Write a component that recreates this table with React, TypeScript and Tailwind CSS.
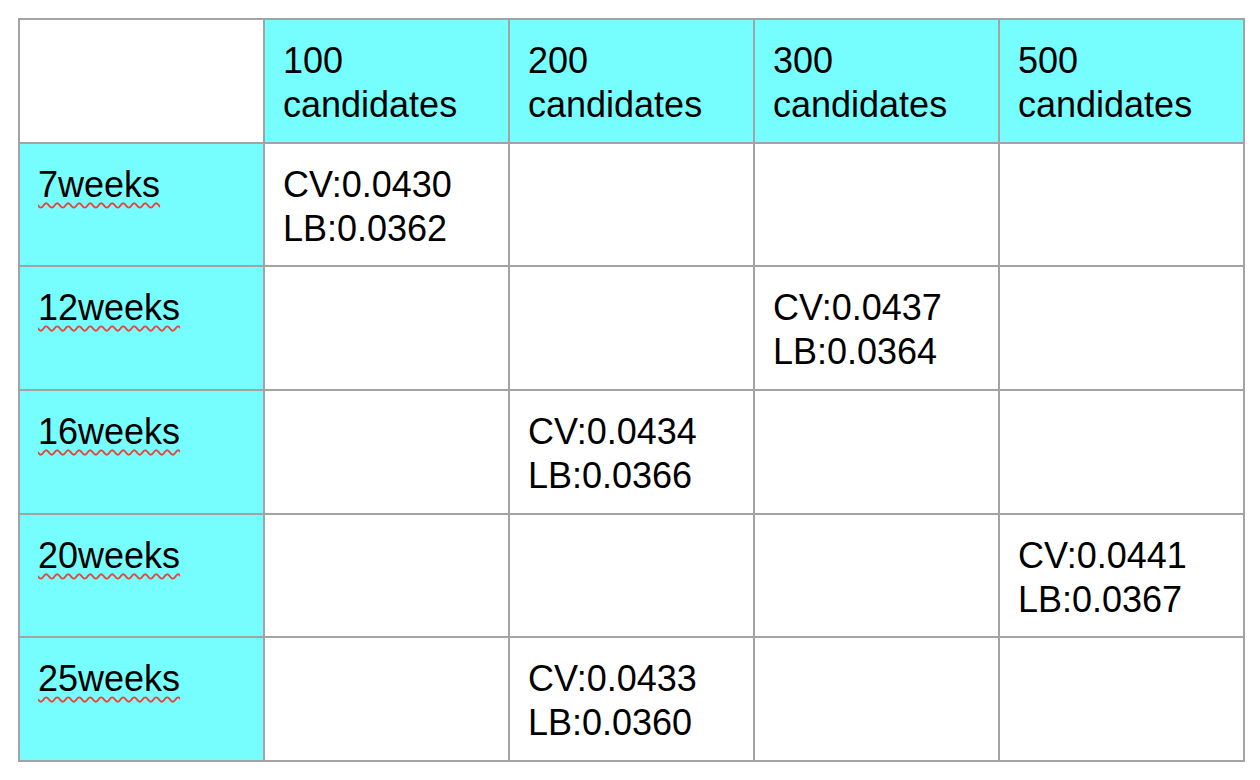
import React from "react";

const header = ["100", "200", "300", "500"];
const rows: { label: string; cells: (string[] | null)[] }[] = [
  { label: "7weeks", cells: [["CV:0.0430", "LB:0.0362"], null, null, null] },
  { label: "12weeks", cells: [null, null, ["CV:0.0437", "LB:0.0364"], null] },
  { label: "16weeks", cells: [null, ["CV:0.0434", "LB:0.0366"], null, null] },
  { label: "20weeks", cells: [null, null, null, ["CV:0.0441", "LB:0.0367"]] },
  { label: "25weeks", cells: [null, ["CV:0.0433", "LB:0.0360"], null, null] },
];

const headCell = "pl-[18px] pt-[19px] text-[36px] leading-[44px] text-black bg-[#76fdfe]";
const bodyCell = "pl-[18px] pt-[19px] text-[36px] leading-[44px] text-black";

export default function App() {
  return (
    <div
      className="w-[1260px] h-[780px] bg-white p-[18px]"
      style={{ fontFamily: '"Liberation Sans", Arial, sans-serif' }}
    >
      <div className="grid w-fit h-[744px] grid-cols-[repeat(5,243px)] grid-rows-[repeat(6,1fr)] gap-[2px] p-[2px] bg-[#a3a3a3]">
        <div className="bg-white" />
        {header.map((h) => (
          <div key={h} className={headCell}>
            <div>{h}</div>
            <div>candidates</div>
          </div>
        ))}
        {rows.map((r) => (
          <React.Fragment key={r.label}>
            <div className={`${bodyCell} bg-[#76fdfe]`}>
              <span className="underline decoration-wavy decoration-[#e8453c] decoration-2 underline-offset-[5px]">
                {r.label}
              </span>
            </div>
            {r.cells.map((c, i) => (
              <div key={i} className={`${bodyCell} bg-white`}>
                {c && (
                  <>
                    <div>{c[0]}</div>
                    <div>{c[1]}</div>
                  </>
                )}
              </div>
            ))}
          </React.Fragment>
        ))}
      </div>
    </div>
  );
}
